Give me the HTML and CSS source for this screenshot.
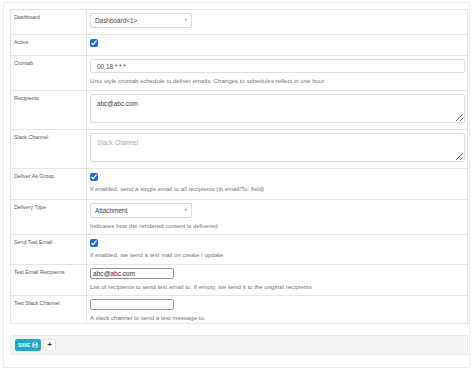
FILE: index.html
```html
<!DOCTYPE html>
<html lang="en">
<head>
  <meta charset="UTF-8" />
  <title>Alert / Report</title>
  <link rel="stylesheet" href="styles.css">
</head>
<body>

  <!-- form panel -->
  <div class="panel">
    <table class="form-table">
      <tr class="row-dashboard">
        <td class="col-label">Dashboard</td>
        <td class="col-field">
          <div class="select-wrap">
            <select class="select">
              <option>Dashboard&lt;1&gt;</option>
            </select>
            <span class="caret">&#9662;</span>
          </div>
        </td>
      </tr>
      <tr class="row-active">
        <td class="col-label">Active</td>
        <td class="col-field"><input type="checkbox" class="check" checked></td>
      </tr>
      <tr class="row-crontab">
        <td class="col-label">Crontab</td>
        <td class="col-field">
          <input type="text" class="text-input" value="00 18 * * *">
          <div class="help">Unix style crontab schedule to deliver emails. Changes to schedules reflect in one hour.</div>
        </td>
      </tr>
      <tr class="row-area">
        <td class="col-label">Recipients</td>
        <td class="col-field"><textarea class="text-area">abc@abc.com</textarea></td>
      </tr>
      <tr class="row-area">
        <td class="col-label">Slack Channel</td>
        <td class="col-field"><textarea class="text-area" placeholder="Slack Channel"></textarea></td>
      </tr>
      <tr class="row-group">
        <td class="col-label">Deliver As Group</td>
        <td class="col-field">
          <input type="checkbox" class="check" checked>
          <div class="help">If enabled, send a single email to all recipients (in email/To: field)</div>
        </td>
      </tr>
      <tr class="row-select">
        <td class="col-label">Delivery Type</td>
        <td class="col-field">
          <div class="select-wrap">
            <select class="select">
              <option>Attachment</option>
            </select>
            <span class="caret">&#9662;</span>
          </div>
          <div class="help">Indicates how the rendered content is delivered</div>
        </td>
      </tr>
      <tr class="row-check">
        <td class="col-label">Send Test Email</td>
        <td class="col-field">
          <input type="checkbox" class="check" checked>
          <div class="help">If enabled, we send a test mail on create / update</div>
        </td>
      </tr>
      <tr class="row-small">
        <td class="col-label">Test Email Recipients</td>
        <td class="col-field">
          <input type="text" class="plain-input" value="abc@abc.com">
          <div class="help">List of recipients to send test email to. If empty, we send it to the original recipients</div>
        </td>
      </tr>
      <tr class="row-last">
        <td class="col-label">Test Slack Channel</td>
        <td class="col-field">
          <input type="text" class="plain-input">
          <div class="help">A slack channel to send a test message to.</div>
        </td>
      </tr>
    </table>

    <!-- save / add -->
    <div class="well">
      <button class="btn-save">SAVE
        <svg width="6" height="6" viewBox="0 0 12 12"><path d="M1 1h8l2 2v8H1z" fill="#fff"/><rect x="3" y="1.6" width="5" height="3" fill="#20a7c9"/><rect x="3.2" y="7" width="5.6" height="3.4" fill="#20a7c9"/></svg>
      </button>
      <button class="btn-add">+</button>
    </div>
  </div>

</body>
</html>
```

FILE: styles.css
```css
/* page */
body {
  margin: 0;
  font-family: "Liberation Sans", Arial, sans-serif;
  background: #fff;
  color: #333;
}

.panel {
  margin: 2px 4px 0 3px;
  height: 366px;
  box-sizing: border-box;
  border: 1px solid #ececec;
  padding: 6px 2px 0 6px;
}

/* table */
.form-table {
  width: 458px;
  border-collapse: collapse;
  border: 1px solid #e4e4e4;
}
.form-table td {
  border-top: 1px solid #e4e4e4;
  vertical-align: top;
  padding: 0;
}
.col-label {
  width: 72px;
  padding: 4px 0 0 3px !important;
  border-right: 1px solid #e4e4e4;
  font-size: 5.3px;
  color: #555;
}
.col-field {
  padding: 3px 2px 0 3px !important;
}

/* row heights (content height, padding and border come on top) */
.row-dashboard td { height: 20px; }
.row-active td { height: 16px; }
.row-crontab td { height: 30px; }
.row-area td { height: 34px; }
.row-group td { height: 26px; }
.row-select td { height: 30px; }
.row-check td { height: 25px; }
.row-small td { height: 26px; }
.row-last td { height: 23px; }
.row-group .col-field,
.row-check .col-field,
.row-active .col-field { padding-top: 4px !important; }

.help {
  font-size: 6.1px;
  color: #777;
  margin-top: 4px;
}

/* select */
.select-wrap {
  position: relative;
  width: 102px;
}
.select {
  appearance: none;
  width: 102px;
  height: 15px;
  box-sizing: border-box;
  border: 1px solid #d9d9d9;
  border-radius: 2px;
  background: #fff;
  padding: 0 0 0 4px;
  font-family: inherit;
  font-size: 6.4px;
  color: #444;
  display: block;
}
.caret {
  position: absolute;
  right: 5px;
  top: 4px;
  font-size: 4px;
  color: #888;
}

/* checkbox */
.check {
  width: 8px;
  height: 8px;
  margin: 0;
  display: block;
  accent-color: #2169d9;
}

/* inputs */
.text-input {
  display: block;
  width: 375px;
  height: 14px;
  box-sizing: border-box;
  border: 1px solid #e0e0e0;
  border-radius: 2px;
  padding: 0 0 0 6px;
  font-family: inherit;
  font-size: 6.4px;
  color: #444;
}
.text-area {
  display: block;
  width: 375px;
  height: 29px;
  box-sizing: border-box;
  border: 1px solid #e0e0e0;
  border-radius: 2px;
  padding: 5px 6px;
  font-family: inherit;
  font-size: 6.4px;
  color: #444;
  resize: vertical;
}
.text-area::placeholder { color: #aaa; }
.plain-input {
  display: block;
  width: 84px;
  height: 11px;
  box-sizing: border-box;
  border: 1px solid #999;
  border-radius: 2px;
  padding: 0 2px;
  font-family: inherit;
  font-size: 6.6px;
  color: #333;
}

/* footer well */
.well {
  margin-top: 11px;
  width: 458px;
  height: 20px;
  box-sizing: border-box;
  background: #f5f5f5;
  border: 1px solid #ebebeb;
  display: flex;
  align-items: center;
  gap: 2px;
  padding-left: 4px;
}
.btn-save {
  height: 12px;
  width: 26px;
  border: none;
  border-radius: 2px;
  background: #20a7c9;
  color: #fff;
  font-family: inherit;
  font-size: 4.6px;
  font-weight: 600;
  padding: 0;
  display: flex;
  align-items: center;
  justify-content: center;
  gap: 2px;
}
.btn-add {
  height: 12px;
  width: 13px;
  border: 1px solid #e5e5e5;
  border-radius: 2px;
  background: #fff;
  color: #333;
  font-family: inherit;
  font-size: 8px;
  font-weight: 700;
  padding: 0;
  line-height: 10px;
}
```
